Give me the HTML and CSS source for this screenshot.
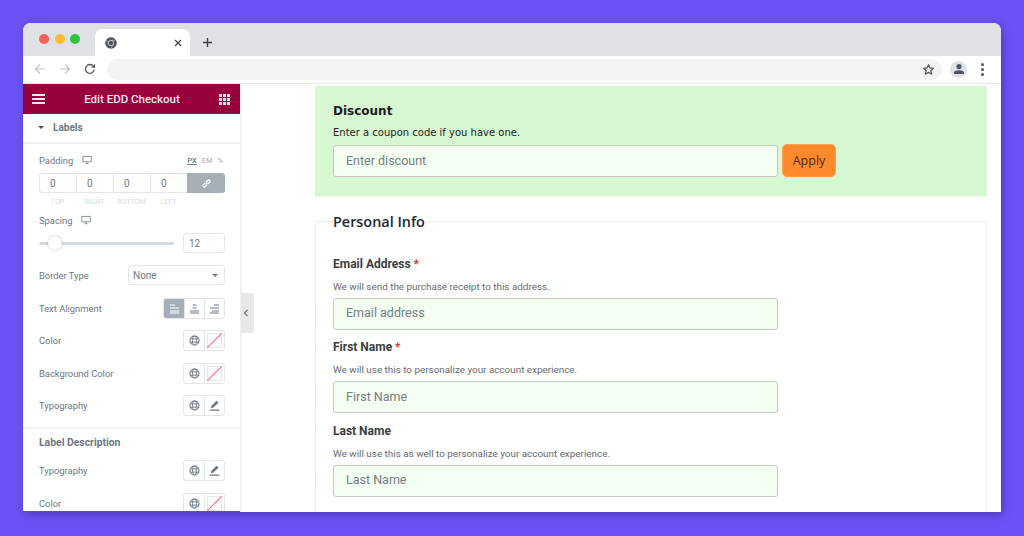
FILE: index.html
```html
<!DOCTYPE html>
<html lang="en">
<head>
<meta charset="utf-8">
<title>Edit EDD Checkout</title>
<link rel="stylesheet" href="styles.css">
</head>
<body>
<svg class="defs" width="0" height="0" aria-hidden="true">
  <symbol id="i-globe" viewBox="0 0 12 12"><circle cx="6" cy="6" r="5" fill="none" stroke="currentColor" stroke-width="1.1"/><ellipse cx="6" cy="6" rx="2.2" ry="5" fill="none" stroke="currentColor" stroke-width="1"/><path d="M1.2 4.2h9.6M1.2 7.8h9.6" stroke="currentColor" stroke-width="1"/></symbol>
  <symbol id="i-pen" viewBox="0 0 12 12"><path d="M8.2 .8l2.2 2.2-5.6 5.3-2.8.7.7-2.8z" fill="currentColor"/><path d="M.8 11h10.4" stroke="currentColor" stroke-width="1.2"/></symbol>
  <symbol id="i-mon" viewBox="0 0 10 10"><path d="M.8 1.4h8.4v5.4H.8z" fill="none" stroke="currentColor" stroke-width="1"/><path d="M3.4 8.7h3.2M5 7v1.6" stroke="currentColor" stroke-width="1"/></symbol>
  <symbol id="i-none" viewBox="0 0 15 15"><path d="M.5 .5h14v14H.5z" fill="#fff" stroke="#e3e5e8"/><path d="M0 15L15 0" stroke="#ff6b78" stroke-width="1.1"/></symbol>
</svg>
<div class="window">
  <div class="tabstrip">
    <div class="lights"><span class="light red"></span><span class="light amber"></span><span class="light green"></span></div>
    <div class="tab">
      <svg class="chrome-logo" width="12" height="12" viewBox="0 0 12 12"><circle cx="6" cy="6" r="5.8" fill="#4f5256"/><circle cx="6" cy="6" r="2.9" fill="#d8dadc"/><circle cx="6" cy="6" r="2.2" fill="#4f5256"/><path d="M6 3.2h5.2M3.6 7.4L1.2 3M8.4 7.4l-2.8 4.4" stroke="#c8cacc" stroke-width=".6" fill="none"/></svg>
      <svg class="tab-close" width="8" height="8" viewBox="0 0 8 8"><path d="M1 1l6 6M7 1L1 7" stroke="#45484c" stroke-width="1.3"/></svg>
    </div>
    <svg class="tab-new" width="11" height="11" viewBox="0 0 11 11"><path d="M5.5 1v9M1 5.5h9" stroke="#3c4043" stroke-width="1.4"/></svg>
  </div>
  <div class="toolbar">
    <svg width="12" height="12" viewBox="0 0 12 12"><path d="M11 6H1.5M6 1.5L1.5 6 6 10.5" fill="none" stroke="#c0c3c7" stroke-width="1.2"/></svg>
    <svg width="12" height="12" viewBox="0 0 12 12"><path d="M1 6h9.5M6 1.5L10.5 6 6 10.5" fill="none" stroke="#c0c3c7" stroke-width="1.2"/></svg>
    <svg width="12" height="12" viewBox="0 0 12 12"><path d="M10.2 6.6A4.4 4.4 0 1 1 8.9 2.7" fill="none" stroke="#55585c" stroke-width="1.3"/><path d="M11 .8v3.9H7.1z" fill="#55585c"/></svg>
    <div class="omnibox">
      <svg width="13" height="13" viewBox="0 0 24 24"><path d="M12 3l2.7 6.1 6.6.7-5 4.4 1.5 6.5-5.8-3.4-5.8 3.4 1.5-6.5-5-4.4 6.6-.7z" fill="none" stroke="#55585c" stroke-width="2.2" stroke-linejoin="round"/></svg>
    </div>
    <div class="avatar"><svg width="12" height="12" viewBox="0 0 12 12"><circle cx="6" cy="3.6" r="2.6" fill="#4f5564"/><path d="M1 11V9.6C1 8 3.5 7.2 6 7.2s5 .8 5 2.4V11z" fill="#4f5564"/></svg></div>
    <div class="kebab"><span></span><span></span><span></span></div>
  </div>
  <div class="viewport">
    <aside class="panel">
      <header class="panel-head">
        <span class="burger"><i></i><i></i><i></i></span>
        <span class="panel-title">Edit EDD Checkout</span>
        <svg class="grid-ic" width="11" height="11" viewBox="0 0 11 11"><path d="M0 0h3v3H0zM4 0h3v3H4zM8 0h3v3H8zM0 4h3v3H0zM4 4h3v3H4zM8 4h3v3H8zM0 8h3v3H0zM4 8h3v3H4zM8 8h3v3H8z" fill="#f6e6ee"/></svg>
      </header>
      <div class="section-head"><span class="caret"></span><span>Labels</span></div>
      <div class="controls">
        <div class="row-top">
          <span class="lbl">Padding</span>
          <svg class="mon" width="10" height="10"><use href="#i-mon"/></svg>
          <span class="units"><b>PX</b><span>EM</span><span>%</span></span>
        </div>
        <div class="dims">
          <span class="dim">0</span><span class="dim">0</span><span class="dim">0</span><span class="dim">0</span>
          <span class="link-btn"><svg width="11" height="11" viewBox="0 0 12 12"><path d="M5 7l2-2M4.6 5.4L2.6 7.4a1.4 1.4 0 0 0 2 2l2-2M7.4 6.6l2-2a1.4 1.4 0 0 0-2-2l-2 2" fill="none" stroke="#fff" stroke-width="1.4"/></svg></span>
        </div>
        <div class="dim-labels"><span>TOP</span><span>RIGHT</span><span>BOTTOM</span><span>LEFT</span></div>
        <div class="row-top spacing">
          <span class="lbl">Spacing</span>
          <svg class="mon" width="10" height="10"><use href="#i-mon"/></svg>
        </div>
        <div class="slider-row">
          <div class="track"><span class="thumb"></span></div>
          <span class="num">12</span>
        </div>
        <div class="row row-border">
          <span class="lbl">Border Type</span>
          <span class="select">None<i class="caret small"></i></span>
        </div>
        <div class="row">
          <span class="lbl">Text Alignment</span>
          <span class="group">
            <span class="cell on"><svg width="11" height="11" viewBox="0 0 11 11"><path d="M1 2h5M1 5h9M1 8h9M1 10h9" stroke="#fff" stroke-width="1.2"/></svg></span>
            <span class="cell"><svg width="11" height="11" viewBox="0 0 11 11"><path d="M3.5 2h4M3.5 5h4M1 8h9M1 10h9" stroke="#6d7882" stroke-width="1.2"/></svg></span>
            <span class="cell"><svg width="11" height="11" viewBox="0 0 11 11"><path d="M5 2h5M1 5h9M3 8h7M1 10h9" stroke="#6d7882" stroke-width="1.2"/></svg></span>
          </span>
        </div>
        <div class="row">
          <span class="lbl">Color</span>
          <span class="group">
            <span class="cell globe"><svg width="11" height="11"><use href="#i-globe"/></svg></span>
            <span class="cell"><svg width="15" height="15"><use href="#i-none"/></svg></span>
          </span>
        </div>
        <div class="row">
          <span class="lbl">Background Color</span>
          <span class="group">
            <span class="cell globe"><svg width="11" height="11"><use href="#i-globe"/></svg></span>
            <span class="cell"><svg width="15" height="15"><use href="#i-none"/></svg></span>
          </span>
        </div>
        <div class="row">
          <span class="lbl">Typography</span>
          <span class="group">
            <span class="cell globe"><svg width="11" height="11"><use href="#i-globe"/></svg></span>
            <span class="cell globe"><svg width="11" height="11"><use href="#i-pen"/></svg></span>
          </span>
        </div>
      </div>
      <div class="controls second">
        <div class="subhead">Label Description</div>
        <div class="row">
          <span class="lbl">Typography</span>
          <span class="group">
            <span class="cell globe"><svg width="11" height="11"><use href="#i-globe"/></svg></span>
            <span class="cell globe"><svg width="11" height="11"><use href="#i-pen"/></svg></span>
          </span>
        </div>
        <div class="row">
          <span class="lbl">Color</span>
          <span class="group">
            <span class="cell globe"><svg width="11" height="11"><use href="#i-globe"/></svg></span>
            <span class="cell"><svg width="15" height="15"><use href="#i-none"/></svg></span>
          </span>
        </div>
      </div>
    </aside>
    <span class="collapse"><svg width="6" height="8" viewBox="0 0 6 8"><path d="M4.5 1L1.5 4l3 3" fill="none" stroke="#6d7882" stroke-width="1.3"/></svg></span>
    <main class="page">
      <section class="discount">
        <h3 class="discount-title">Discount</h3>
        <p class="discount-text">Enter a coupon code if you have one.</p>
        <div class="discount-row">
          <input class="field" placeholder="Enter discount">
          <button class="apply" type="button">Apply</button>
        </div>
      </section>
      <fieldset class="info">
        <legend>Personal Info</legend>
        <div class="fgroup first">
          <div class="flabel">Email Address <em>*</em></div>
          <div class="fdesc">We will send the purchase receipt to this address.</div>
          <input class="field" placeholder="Email address">
        </div>
        <div class="fgroup">
          <div class="flabel">First Name <em>*</em></div>
          <div class="fdesc">We will use this to personalize your account experience.</div>
          <input class="field" placeholder="First Name">
        </div>
        <div class="fgroup">
          <div class="flabel">Last Name</div>
          <div class="fdesc">We will use this as well to personalize your account experience.</div>
          <input class="field" placeholder="Last Name">
        </div>
      </fieldset>
    </main>
  </div>
</div>
</body>
</html>
```
FILE: styles.css
```css
* { box-sizing: border-box; }
html, body { margin: 0; height: 536px; overflow: hidden; }
body { background: #6b52f5; padding: 23px; font-family: Roboto, sans-serif; }
.defs { position: absolute; }

.window { width: 978px; height: 489px; background: #fff; border-radius: 8px 8px 0 0; overflow: hidden; display: flex; flex-direction: column; box-shadow: 2px 3px 8px rgba(30, 20, 90, .35); }

.tabstrip { height: 33px; background: #dfe1e5; display: flex; align-items: flex-end; flex: none; }
.lights { display: flex; gap: 5.5px; width: 72px; padding: 0 0 1px 16px; height: 33px; align-items: center; }
.light { width: 10px; height: 10px; border-radius: 50%; }
.red { background: #fb5f57; }
.amber { background: #fdbb2e; }
.green { background: #28c83f; }
.tab { width: 95px; height: 27px; background: #fff; border-radius: 8px 8px 0 0; display: flex; align-items: center; justify-content: space-between; padding: 0 8px 0 10px; }
.tab-new { margin: 0 0 8px 12px; }

.toolbar { height: 28px; flex: none; background: #fff; border-bottom: 1px solid #e8e9eb; display: flex; align-items: center; padding: 0 0 1px 11px; gap: 13px; }
.omnibox { width: 835px; height: 21px; margin-left: -2px; background: #f1f3f4; border-radius: 11px; display: flex; align-items: center; justify-content: flex-end; padding-right: 7px; }
.avatar { width: 17px; height: 17px; margin-left: -5px; border-radius: 50%; background: #dfe1e5; display: flex; align-items: center; justify-content: center; }
.kebab { display: flex; flex-direction: column; gap: 2px; margin-left: 1px; }
.kebab span { width: 3px; height: 3px; border-radius: 50%; background: #55585c; }

.viewport { flex: 1; display: flex; min-height: 0; position: relative; }

.panel { width: 217px; height: 428px; flex: none; background: #fff; overflow: hidden; border-bottom: 1px solid #5f5f63; box-shadow: 1px 0 3px rgba(0, 0, 0, .1); color: #6d7882; font-size: 9.4px; }
.panel-head { height: 30px; background: #97003c; color: #f6e6ee; display: flex; align-items: center; justify-content: space-between; padding: 0 10px 0 9px; font-size: 11.5px; font-weight: 500; }
.burger { display: flex; flex-direction: column; gap: 2px; width: 13px; }
.burger i { height: 2px; background: #f6e6ee; }
.section-head { height: 30px; display: flex; align-items: center; gap: 9px; padding: 0 0 2px 15px; font-weight: 700; font-size: 10px; border-bottom: 2px solid #f1f2f3; }
.caret { width: 0; height: 0; border: 3.5px solid transparent; border-top: 3.5px solid #4b4f55; border-bottom: 0; }
.controls { padding: 9px 15px 11px 16px; }
.second { border-top: 2px solid #f1f2f3; padding-top: 7px; padding-bottom: 0; }
.lbl { color: #6d7882; font-size: 9.4px; }
.row-top { display: flex; align-items: center; height: 14px; gap: 9px; }
.spacing { gap: 8px; }
.mon { color: #8a939b; }
.units { margin-left: auto; display: flex; gap: 5px; font-size: 7.5px; color: #a4afb7; padding-right: 2px; }
.units b { font-weight: 500; color: #6d7882; text-decoration: underline; }
.dims { display: flex; margin-top: 6px; height: 20px; }
.dim { width: 37px; border: 1px solid #e3e5e8; border-right: 0; display: flex; align-items: center; padding-left: 10px; color: #6d7882; background: #fff; font-size: 10px; }
.dim:first-child { border-radius: 3px 0 0 3px; }
.link-btn { width: 38px; background: #a4afb7; border-radius: 0 3px 3px 0; display: flex; align-items: center; justify-content: center; }
.dim-labels { display: flex; font-size: 7px; color: #d5dadf; height: 12px; margin-top: 3px; line-height: 12px; }
.dim-labels span { width: 37px; text-align: center; }
.spacing { margin-top: 5px; }
.slider-row { display: flex; align-items: center; justify-content: space-between; margin-top: 6px; height: 20px; }
.track { width: 135px; height: 3px; background: #d5dadf; border-radius: 2px; display: flex; align-items: center; padding-left: 9px; }
.thumb { width: 14px; height: 14px; border-radius: 50%; background: #fff; box-shadow: 0 0 2px rgba(0, 0, 0, .35); }
.num { width: 42px; height: 20px; border: 1px solid #e3e5e8; border-radius: 3px; padding-left: 5px; display: flex; align-items: center; font-size: 10px; }
.row { display: flex; align-items: center; justify-content: space-between; height: 21px; margin-top: 11.5px; }
.row-border { margin-top: 12px; margin-bottom: 12.5px; height: 20px; }
.select { width: 97px; height: 20px; border: 1px solid #e3e5e8; border-radius: 3px; padding: 0 6px 0 4px; display: flex; align-items: center; justify-content: space-between; font-size: 10px; }
.caret.small { border-width: 3px; border-top-color: #6d7882; border-bottom: 0; }
.group { display: flex; border: 1px solid #e3e5e8; border-radius: 3px; height: 21px; overflow: hidden; }
.cell { width: 20px; display: flex; align-items: center; justify-content: center; border-left: 1px solid #e3e5e8; }
.cell:first-child { border-left: 0; }
.cell.on { background: #a4afb7; }
.globe { color: #6d7882; }
.subhead { font-weight: 700; font-size: 10.4px; height: 14px; line-height: 14px; }
.second .row:nth-child(2) { margin-top: 10px; }

.collapse { position: absolute; left: 218px; top: 209px; width: 13px; height: 40px; background: #e6e8ea; border-radius: 0 3px 3px 0; display: flex; align-items: center; padding-left: 2px; }

.page { flex: 1; min-width: 0; height: 100%; overflow: hidden; padding: 2px 14px 0 75px; }
.discount { height: 111px; background: #d7f6d2; padding: 17px 18px 0; border-bottom: 1px solid #e9f5e6; }
.discount-title { margin: 0; font: 700 12px/16px "DejaVu Sans", sans-serif; color: #1a1a1a; }
.discount-text { margin: 7px 0 0; font: 10px/14px "DejaVu Sans", sans-serif; color: #222; }
.discount-row { display: flex; align-items: center; gap: 4px; margin-top: 4px; }
.field { display: block; width: 445px; height: 32px; background: #f4fff1; border: 1px solid #c4c8c0; border-radius: 3px; padding: 0 12px; font: 12.5px Roboto, sans-serif; outline: 0; }
.fgroup .field { padding-bottom: 2px; }
.field::placeholder { color: #757d85; opacity: 1; }
.apply { width: 54px; height: 33px; background: #ff8a2e; border: 1px solid #ffa050; border-radius: 5px; color: #4b2a10; font: 12.5px "Open Sans", sans-serif; padding: 0; }
.info { margin: 13px 0 0; padding: 0 17px; border: 1px solid #eeeeee; border-bottom: 0; min-width: 0; height: 320px; }
.info legend { padding: 2px 0 0; font: 600 14.4px/20px "Open Sans", sans-serif; color: #23282d; }
.fgroup { margin-top: 9.5px; }
.fgroup.first { margin-top: 23.7px; }
.flabel { font-weight: 700; font-size: 12px; line-height: 16px; color: #3a3d40; }
.flabel em { color: #c0392b; font-style: normal; }
.fdesc { font-size: 9.9px; line-height: 14px; margin: 8px 0 4px; color: #666a6e; }
```
